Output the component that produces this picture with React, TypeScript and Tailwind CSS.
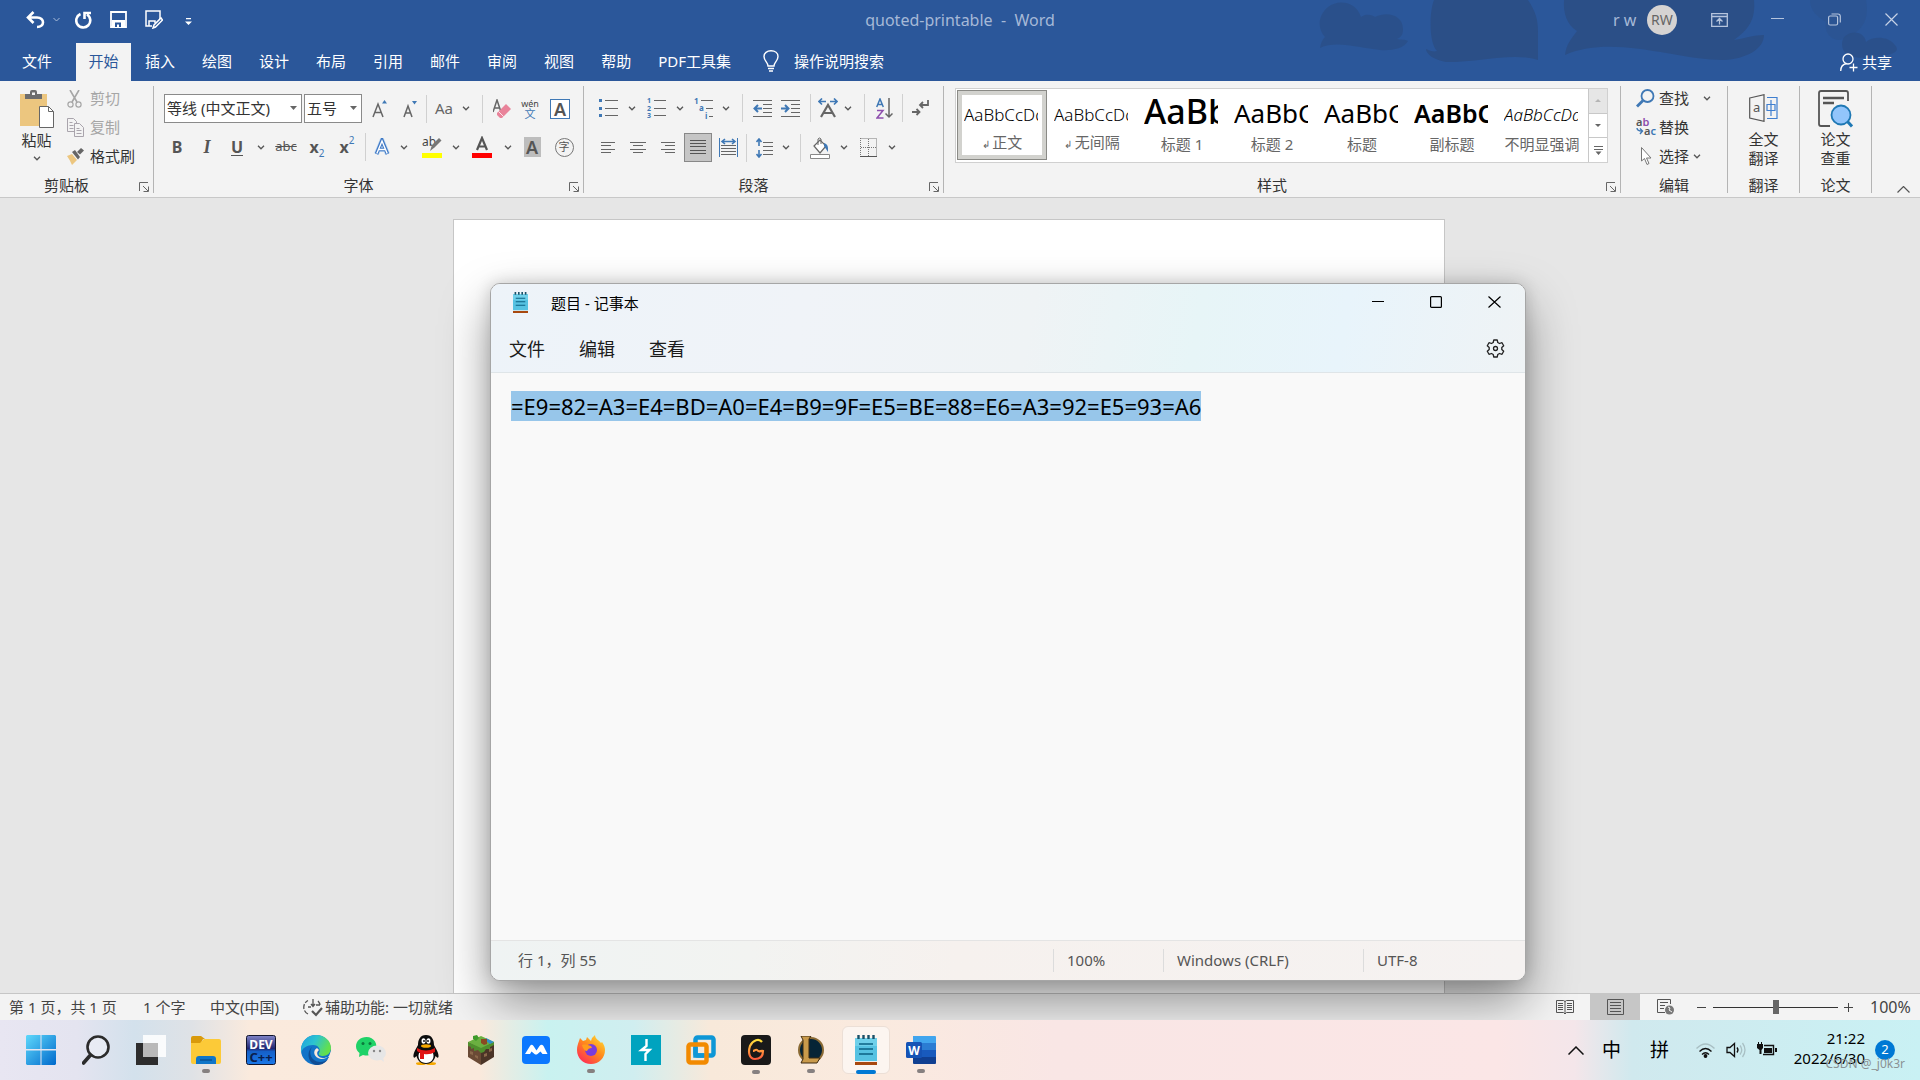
import { useEffect, useRef, type ReactNode } from 'react';

const NOTE = '=E9=82=A3=E4=BD=A0=E4=B9=9F=E5=BE=88=E6=A3=92=E5=93=A6';

const TABS = ['插入', '绘图', '设计', '布局', '引用', '邮件', '审阅', '视图', '帮助', 'PDF工具集'];

const STYLES = [
  { name: '正文', mark: true, sample: 'AaBbCcDd', look: 'text-[17px] leading-9 font-light' },
  { name: '无间隔', mark: true, sample: 'AaBbCcDd', look: 'text-[17px] leading-9 font-light' },
  { name: '标题 1', sample: 'AaBb', look: 'text-[34px] leading-6 font-medium' },
  { name: '标题 2', sample: 'AaBbC', look: 'text-[26px] leading-7' },
  { name: '标题', sample: 'AaBbC', look: 'text-[26px] leading-7' },
  { name: '副标题', sample: 'AaBbC', look: 'text-[25px] leading-7 font-semibold' },
  { name: '不明显强调', sample: 'AaBbCcDd', look: 'text-[17px] leading-8 font-light italic text-[#404040]' }
];

/* ---------- small shared pieces ---------- */

function Chevron() {
  return (
    <svg width="8" height="5" viewBox="0 0 8 5" fill="none" stroke="#555" strokeWidth="1.3" className="shrink-0">
      <path d="M1 .8 4 3.8 7 .8" />
    </svg>
  );
}

interface ToolProps {
  label: string;
  /** Width class of the slot */
  w?: string;
  children: ReactNode;
}

function Tool({ label, w = 'w-8', children }: ToolProps) {
  return (
    <button aria-label={label} className={`flex h-7 shrink-0 items-center justify-center ${w}`}>
      {children}
    </button>
  );
}

function More({ w = 'w-4' }: { w?: string }) {
  return (
    <Tool label="更多选项" w={w}>
      <Chevron />
    </Tool>
  );
}

function Sep({ w = 'w-4' }: { w?: string }) {
  return (
    <span className={`flex h-7 shrink-0 justify-center ${w}`}>
      <span className="w-px bg-[#d0d0d0]" />
    </span>
  );
}

function Launcher() {
  return (
    <button aria-label="对话框启动器" className="absolute right-1 bottom-px">
      <svg width="10" height="10" viewBox="0 0 10 10" fill="none" stroke="#666">
        <path d="M.5 9V.5H9M4 4l5 5M9.5 4.5v5h-5" />
      </svg>
    </button>
  );
}

interface GroupProps {
  title: string;
  w: string;
  /** Padding of the tools area, the title keeps the full width */
  pad?: string;
  launcher?: boolean;
  children: ReactNode;
}

function Group({ title, w, pad = '', launcher = false, children }: GroupProps) {
  return (
    <section className={`relative flex h-[107px] shrink-0 flex-col border-r border-[#b4b4b4] ${w}`}>
      <div className={`flex-1 ${pad}`}>{children}</div>
      <h2 className={`text-center leading-4 text-[#333] ${launcher ? 'pr-5' : ''}`}>{title}</h2>
      {launcher && <Launcher />}
    </section>
  );
}

/** Horizontal text lines, each given as [x1, x2, y] */
function Lines({ rows, color = '#666' }: { rows: number[][]; color?: string }) {
  return <path d={rows.map(([a, b, y]) => `M${a} ${y}.5H${b}`).join('')} stroke={color} />;
}

/* ---------- Word ---------- */

function TitleBar() {
  return (
    <header className="relative overflow-hidden bg-[#2b579a] text-white">
      <svg className="absolute top-0 right-0" width="630" height="81" viewBox="1290 0 630 81" fill="#2b4f87">
        <path d="M1320 48c1-5 2-8 5-11-8-8-7-22 3-30 10-8 28-6 33 10 5-4 12-2 14 0 12-6 28-2 28 12 0 6-2 8-6 10 4 1 8 0 11 2-4 8-18 10-28 9-20-2-44-10-60-2Z" opacity=".8" />
        <path d="M1434 0h94c8 12 10 20 10 32v28c-26-8-54 2-92 2-12-2-20-8-20-13 4 2 8 3 11 2-8-8-8-38-3-51Z" />
        <path d="M1564 0h190c2 20-6 30-20 40 12-2 20-5 30-5 0 14-18 24-40 25-50 0-110-26-159-5 1-10 6-16 12-24-10-6-14-18-13-31Z" />
        <path d="M1810 0h56c4 20-4 34-26 40-10 0-16-8-14-18-10-6-16-12-16-22Z" opacity=".35" />
        <path d="M1842 44c0-14 22-16 24-2 6-6 22-6 28 2 8 8-2 10-12 12-24 4-40 2-40-12Z" opacity=".8" />
      </svg>
      <div className="relative flex h-[43px] items-center justify-between pb-1">
        <div className="flex w-[307px] items-center pl-[26px]">
          <button aria-label="撤消">
            <svg width="19" height="18" viewBox="0 0 19 18" fill="none" stroke="#fff" strokeWidth="2.6">
              <path d="M2 6.5h9c8 0 8 9.500 0 9.500M7.500 1 2 6.500l5.500 5.500" />
            </svg>
          </button>
          <button aria-label="撤消选项" className="px-2">
            <svg width="7" height="5" viewBox="0 0 7 5" fill="none" stroke="#a9bcd9">
              <path d="M.5 1l3 3 3-3" />
            </svg>
          </button>
          <button aria-label="重复" className="pl-[7px]">
            <svg width="17" height="18" viewBox="0 0 17 18" fill="none" stroke="#fff" strokeWidth="2.6">
              <path d="M5.500 3A7 7 0 1 0 12 3.500M9.500 8V2H16" />
            </svg>
          </button>
          <button aria-label="保存" className="pl-[18px]">
            <svg width="17" height="17" viewBox="0 0 17 17">
              <path d="M1 1h15v15H1z" fill="none" stroke="#fff" strokeWidth="1.800" />
              <path d="M2 9h13v7H2zM4 1h9v1H4z" fill="#fff" />
              <path d="M5 11.500h6V16H9v-2.500H7V16H5z" fill="#2b579a" />
            </svg>
          </button>
          <button aria-label="另存为" className="pl-[18px]">
            <svg width="18" height="19" viewBox="0 0 18 19" fill="none" stroke="#fff" strokeWidth="1.500">
              <path d="M7 16H1V1h14v8M4 16v-5h6v2" />
              <path d="m8 18 1-3 7-7 1.500 2-7 7Z" />
            </svg>
          </button>
          <button aria-label="自定义快速访问工具栏" className="pt-1 pl-[22px]">
            <svg width="7" height="8" viewBox="0 0 7 8" fill="#fff">
              <path d="M1 0h5v1.200H1zM0 3.500h7L3.500 7z" />
            </svg>
          </button>
        </div>
        <h1 className="text-base text-[#a6b9d7]">quoted-printable&nbsp; -&nbsp; Word</h1>
        <div className="flex w-[307px] items-center">
          <span className="w-[34px] text-base text-[#a6b9d7]">r w</span>
          <span className="flex size-[30px] items-center justify-center rounded-full bg-[#d5d3d2] text-sm text-[#666]">RW</span>
          <button aria-label="功能区显示选项" className="pl-[34px]">
            <svg width="17" height="14" viewBox="0 0 17 14" fill="none" stroke="#b5c4dd" strokeWidth="1.300">
              <path d="M.700.700h15.600v12.600H.700zM.700 3.500h15.600M8.500 11.500V6M5.500 8.500l3-3 3 3" />
            </svg>
          </button>
          <button aria-label="最小化" className="pl-[43px]">
            <svg width="13" height="13" stroke="#b5c4dd">
              <path d="M0 5.500h13" />
            </svg>
          </button>
          <button aria-label="向下还原" className="pl-11">
            <svg width="13" height="13" viewBox="0 0 13 13" fill="none" stroke="#b5c4dd" strokeWidth="1.200">
              <rect x=".600" y="3" width="9" height="9" rx="1.500" />
              <path d="M3.500 1h6.500q2.300 0 2.300 2.300V9.500" />
            </svg>
          </button>
          <button aria-label="关闭" className="pl-11">
            <svg width="13" height="13" viewBox="0 0 13 13" stroke="#c6d2e6" strokeWidth="1.200">
              <path d="M.500.500l12 12M12.500.500l-12 12" />
            </svg>
          </button>
        </div>
      </div>
      <nav className="relative flex h-[38px] items-center">
        <button className="w-[76px] pr-4 pb-0.5 pl-[22px] text-left">文件</button>
        <button className="h-full w-[55px] bg-[#f3f3f3] pb-0.5 text-center text-[#2b579a]">开始</button>
        <div className="flex gap-[3px] pb-0.5 pl-0.5">
          {TABS.map((tab) => (
            <button key={tab} className="px-3">
              {tab}
            </button>
          ))}
        </div>
        <button className="flex items-center gap-[15px] pb-0.5 pl-5">
          <svg width="16" height="22" viewBox="0 0 16 22" fill="none" stroke="#fff" strokeWidth="1.400">
            <path d="M5 16c0-4-4-5-4-9.500C1 3 4 .800 8 .800s7 2.200 7 5.700c0 4.500-4 5.500-4 9.500ZM5 18.500h6M6 21h4" />
          </svg>
          操作说明搜索
        </button>
        <button className="ml-auto flex items-center gap-1 pr-7">
          <svg width="18" height="19" viewBox="0 0 18 19" fill="none" stroke="#fff" strokeWidth="1.300">
            <circle cx="8" cy="6" r="5" />
            <path d="M.700 18c0-5 3-7 6-7.500M13.500 10.500v8M9.500 14.500h8" />
          </svg>
          共享
        </button>
      </nav>
    </header>
  );
}

function ClipboardGroup() {
  return (
    <Group title="剪贴板" w="w-[154px]" launcher>
      <div className="flex">
        <button className="flex w-[67px] flex-col items-center pt-1 pl-1.5">
          <svg width="36" height="38" viewBox="0 0 36 38">
            <path d="M1 4h27v32H1z" fill="#ecc67f" />
            <path d="M6 9V4h5V2q0-2 2-2h3q2 0 2 2v2h5v5Z" fill="#6d6d6d" />
            <path d="M13 2.500h3V5h-3z" fill="#f3f3f3" />
            <path d="M20.500 16.500h9l5 5v16h-14z" fill="#fff" stroke="#666" />
            <path d="M29.500 16.500v5h5" fill="none" stroke="#666" />
          </svg>
          <span className="leading-6">粘贴</span>
          <span className="flex h-3 items-center">
            <Chevron />
          </span>
        </button>
        <div className="flex flex-col whitespace-nowrap">
          <button disabled className="flex h-[25px] items-center gap-2 text-[#a6a6a6]">
            <svg width="15" height="18" viewBox="0 0 15 18" fill="none" stroke="#a6a6a6" strokeWidth="1.600">
              <path d="M3 0l7 12M12 0 5 12" />
              <circle cx="3.500" cy="14.500" r="2.600" strokeWidth="1.200" />
              <circle cx="11.500" cy="14.500" r="2.600" strokeWidth="1.200" />
            </svg>
            剪切
          </button>
          <button disabled className="flex h-8 items-center gap-1.5 text-[#a6a6a6]">
            <svg width="17" height="19" viewBox="0 0 17 19" fill="#f3f3f3" stroke="#a9a4ac">
              <path d="M.500.500h6l3 3v10h-9zM2.500 4.500h3M2.500 7.500h4M2.500 10.500h4" />
              <path d="M7.500 5.500h5l4 4v9h-9zM9.500 10.500h3M9.500 12.500h5M9.500 15.500h5" />
            </svg>
            复制
          </button>
          <button className="flex h-[27px] items-center gap-1.5">
            <svg width="17" height="17" viewBox="0 0 17 17">
              <path d="M0 8l5-2 5 6-5 5q-2-5-5-9Z" fill="#ecc67f" />
              <path d="M5 4l3-2 5 7-2 2.500ZM10 4l4-4 3 2.500-4 4Z" fill="#666" />
            </svg>
            格式刷
          </button>
        </div>
      </div>
    </Group>
  );
}

function Combo({ label, value, w }: { label: string; value: string; w: string }) {
  return (
    <div className={`relative ${w}`}>
      <select aria-label={label} className="h-[29px] w-full appearance-none border border-[#8a8a8a] bg-white pl-0.5 text-[#333]">
        <option>{value}</option>
      </select>
      <svg className="pointer-events-none absolute top-3 right-[5px]" width="7" height="4" viewBox="0 0 7 4" fill="#666">
        <path d="M0 0h7L3.500 4z" />
      </svg>
    </div>
  );
}

function FontGroup() {
  return (
    <Group title="字体" w="w-[430px]" pad="pl-2" launcher>
      <div className="flex items-center pt-2">
        <div className="flex w-[200px] gap-0.5 pl-0.5">
          <Combo label="字体" value="等线 (中文正文)" w="w-[138px]" />
          <Combo label="字号" value="五号" w="w-[58px]" />
        </div>
        <Tool label="增大字号" w="w-9">
          <svg width="16" height="18" viewBox="0 0 16 18">
            <path d="M1 17 6 4l5 13M3 12.500h6" fill="none" stroke="#666" strokeWidth="1.500" />
            <path d="M10 3.500 12.500 0 15 3.500z" fill="#3f78b5" />
          </svg>
        </Tool>
        <Tool label="减小字号" w="w-6">
          <svg width="16" height="18" viewBox="0 0 16 18">
            <path d="M2 17 6 6l4 11M3.500 13h5" fill="none" stroke="#666" strokeWidth="1.500" />
            <path d="M10 1 12.500 4.500 15 1z" fill="#3f78b5" />
          </svg>
        </Tool>
        <Sep w="w-2" />
        <Tool label="更改大小写" w="w-7">
          <span className="text-[15px] text-[#666]">Aa</span>
        </Tool>
        <More />
        <Sep />
        <Tool label="清除所有格式" w="w-6">
          <svg width="18" height="20" viewBox="0 0 18 20" className="shrink-0">
            <path d="M0 13 4 1l4 12M1.500 9h5" fill="none" stroke="#666" strokeWidth="1.500" />
            <path d="m4 14 9-9 5 5-9 9H7l-3-3Z" fill="#e9839a" />
            <path d="m5.500 12.500 5 5" stroke="#fff" strokeWidth=".800" />
          </svg>
        </Tool>
        <Tool label="拼音指南">
          <span className="flex flex-col items-center text-[#444]">
            <span className="text-[9px] leading-[9px]">wén</span>
            <span className="text-[11px] leading-[11px] text-[#3f78b5]">文</span>
          </span>
        </Tool>
        <Tool label="字符边框" w="w-7">
          <span className="flex size-5 items-center justify-center border border-[#3f78b5] bg-white text-lg font-semibold text-[#555]">A</span>
        </Tool>
      </div>
      <div className="flex items-center pt-[10px] text-[#555]">
        <Tool label="加粗" w="w-[30px]">
          <b className="text-base">B</b>
        </Tool>
        <Tool label="倾斜" w="w-[30px]">
          <i className="font-['Liberation_Serif',serif] text-lg font-bold">I</i>
        </Tool>
        <Tool label="下划线" w="w-[30px]">
          <span className="border-b border-[#555] text-base leading-4 font-bold">U</span>
        </Tool>
        <More w="w-[18px]" />
        <Tool label="删除线">
          <span className="text-[13px] line-through">abc</span>
        </Tool>
        <Tool label="下标" w="w-[30px]">
          <b className="text-base">x</b>
          <span className="self-end text-[10px] text-[#3f78b5]">2</span>
        </Tool>
        <Tool label="上标" w="w-[30px]">
          <b className="text-base">x</b>
          <span className="self-start text-[10px] text-[#3f78b5]">2</span>
        </Tool>
        <Sep w="w-1.5" />
        <Tool label="文本效果" w="w-7">
          <svg width="16" height="18" viewBox="0 0 16 18" fill="none">
            <path d="M2.500 16 8 2.500 13.500 16M5 11.500h6" stroke="#a9cdf0" strokeWidth="5" opacity=".7" />
            <path d="M2.500 16 8 2.500 13.500 16M5 11.500h6" stroke="#3f78c5" strokeWidth="3.600" />
            <path d="M2.800 15.500 8 3l5.200 12.500M5 11.500h6" stroke="#fff" strokeWidth="1.400" />
          </svg>
        </Tool>
        <More w="w-4" />
        <Tool label="文本突出显示颜色" w="w-10">
          <svg width="20" height="22" viewBox="0 0 20 22">
            <text x="0" y="10" fontSize="12" fill="#444">ab</text>
            <path d="m8 15 2-6 7-7 2.500 2.500-7 7Z" fill="#777" />
            <path d="M0 17h20v5H0z" fill="#ff0" />
          </svg>
        </Tool>
        <More w="w-2" />
        <Tool label="字体颜色" w="w-11">
          <svg width="20" height="22" viewBox="0 0 20 22">
            <path d="M5 14 10 2l5 12M7 10.500h6" fill="none" stroke="#555" strokeWidth="2.200" />
            <path d="M0 17h20v5H0z" fill="red" />
          </svg>
        </Tool>
        <More w="w-2" />
        <Tool label="字符底纹" w="w-10">
          <span className="flex h-5 w-[17px] items-center justify-center bg-[#bdbdbd] text-lg font-semibold">A</span>
        </Tool>
        <Tool label="带圈字符" w="w-6">
          <span className="flex size-[19px] items-center justify-center rounded-full border border-[#777] text-[11px]">字</span>
        </Tool>
      </div>
    </Group>
  );
}

function ParagraphGroup() {
  return (
    <Group title="段落" w="w-[360px]" pad="pl-2" launcher>
      <div className="flex items-center pt-2">
        <Tool label="项目符号">
          <svg width="19" height="20" viewBox="0 0 19 20">
            <Lines rows={[[6, 19, 2], [6, 19, 10], [6, 19, 17]]} />
            <path d="M0 1h3v3H0zM0 9h3v3H0zM0 16h3v3H0z" fill="#3f78b5" />
          </svg>
        </Tool>
        <More />
        <Tool label="编号">
          <svg width="19" height="20" viewBox="0 0 19 20">
            <Lines rows={[[7, 19, 2], [7, 19, 10], [7, 19, 17]]} />
            <g fill="#3f78b5" fontSize="7" fontWeight="700">
              <text x="0" y="5">1</text>
              <text x="0" y="13">2</text>
              <text x="0" y="20">3</text>
            </g>
          </svg>
        </Tool>
        <More />
        <Tool label="多级列表">
          <svg width="20" height="21" viewBox="0 0 20 21">
            <Lines rows={[[7, 19, 2], [12, 19, 10], [15, 19, 18]]} />
            <g fill="#3f78b5" fontSize="8" fontWeight="700">
              <text x="0" y="6">1</text>
              <text x="5" y="13">a</text>
              <text x="11" y="21">i</text>
            </g>
          </svg>
        </Tool>
        <More w="w-3" />
        <Sep w="w-5" />
        <Tool label="减少缩进量" w="w-5">
          <svg width="19" height="19" viewBox="0 0 19 19" className="shrink-0">
            <Lines rows={[[0, 19, 1], [10, 19, 5], [10, 19, 9], [10, 19, 13], [0, 19, 17]]} />
            <path d="M9 9.500H1.500M5 6 1.500 9.500 5 13" fill="none" stroke="#3f78b5" strokeWidth="2" />
          </svg>
        </Tool>
        <Tool label="增加缩进量" w="w-9">
          <svg width="19" height="19" viewBox="0 0 19 19">
            <Lines rows={[[0, 19, 1], [10, 19, 5], [10, 19, 9], [10, 19, 13], [0, 19, 17]]} />
            <path d="M0 9.500h7.500M4 6l3.500 3.500L4 13" fill="none" stroke="#3f78b5" strokeWidth="2" />
          </svg>
        </Tool>
        <Sep w="w-1" />
        <Tool label="中文版式">
          <svg width="20" height="20" viewBox="0 0 20 20" fill="none">
            <path d="M3 19 10 7l7 12M6 15h8" stroke="#666" strokeWidth="2.200" />
            <path d="M8 3.500H1M4 .500l-3 3 3 3M12 3.500h7M16 .500l3 3-3 3" stroke="#3f78b5" strokeWidth="1.600" />
          </svg>
        </Tool>
        <More w="w-2" />
        <Sep w="w-6" />
        <Tool label="排序" w="w-4">
          <svg width="17" height="21" viewBox="0 0 17 21" fill="none" className="shrink-0">
            <path d="M.700 9 4 1l3.300 8M2 6.500h4" stroke="#3f78b5" strokeWidth="1.500" />
            <path d="M1 12.500h6L1 20h6.500" stroke="#8e4fae" strokeWidth="1.500" />
            <path d="M13 0v19M9.500 15.500 13 19l3.500-3.500" stroke="#666" strokeWidth="1.500" />
          </svg>
        </Tool>
        <Sep w="w-5" />
        <Tool label="显示编辑标记" w="w-4">
          <svg width="17" height="16" viewBox="0 0 17 16" fill="none" stroke="#666" strokeWidth="1.800" className="shrink-0">
            <path d="M16 0v5H8M11 2 8 5l3 3M0 12h7M4.500 9l3 3-3 3" />
          </svg>
        </Tool>
      </div>
      <div className="flex items-center pt-[11px]">
        <Tool label="左对齐">
          <svg width="16" height="13" viewBox="0 0 16 13">
            <Lines rows={[[1, 15, 1], [1, 11, 4], [1, 15, 8], [1, 11, 11]]} />
          </svg>
        </Tool>
        <Tool label="居中" w="w-7">
          <svg width="16" height="13" viewBox="0 0 16 13">
            <Lines rows={[[0, 16, 1], [3, 13, 4], [0, 16, 8], [3, 13, 11]]} />
          </svg>
        </Tool>
        <Tool label="右对齐">
          <svg width="16" height="13" viewBox="0 0 16 13">
            <Lines rows={[[1, 15, 1], [5, 15, 4], [1, 15, 8], [5, 15, 11]]} />
          </svg>
        </Tool>
        <button aria-label="两端对齐" aria-pressed="true" className="flex h-[29px] w-7 items-center justify-center border border-[#888] bg-[#c5c5c5]">
          <svg width="16" height="15" viewBox="0 0 16 15">
            <Lines rows={[[0, 16, 0], [0, 16, 3], [0, 16, 6], [0, 16, 10], [0, 16, 13]]} color="#555" />
          </svg>
        </button>
        <Tool label="分散对齐">
          <svg width="19" height="19" viewBox="0 0 19 19" fill="none">
            <path d="M.500 0v19M18.500 0v19" stroke="#3f78b5" />
            <path d="M3 3.500h13M6 1 3 3.500 6 6M13 1l3 2.500L13 6" stroke="#3f78b5" strokeWidth="1.600" />
            <Lines rows={[[2, 17, 7], [2, 17, 10], [2, 17, 13], [2, 17, 16]]} />
          </svg>
        </Tool>
        <Sep w="w-1" />
        <Tool label="行和段落间距">
          <svg width="17" height="20" viewBox="0 0 17 20" fill="none">
            <path d="M3 1v7M.500 4 3 1l2.500 3M3 12v7M.500 16 3 19l2.500-3" stroke="#3f78b5" strokeWidth="1.600" />
            <Lines rows={[[7, 17, 4], [7, 17, 8], [7, 17, 12], [7, 17, 16]]} />
          </svg>
        </Tool>
        <More w="w-3" />
        <Sep />
        <Tool label="底纹" w="w-6">
          <svg width="20" height="22" viewBox="0 0 20 22" fill="none" className="shrink-0">
            <path d="M4 9 10 3l6 6-6 7Z" fill="#fff" stroke="#666" strokeWidth="1.200" />
            <path d="M8 8V2q1.500-2 3 0v5" stroke="#666" />
            <path d="M14 6q5 1 4 9-2-3-4-6Z" fill="#3f78b5" />
            <path d="M.500 17.500h19v4H.500z" fill="#fff" stroke="#888" />
          </svg>
        </Tool>
        <More w="w-6" />
        <Tool label="边框" w="w-6">
          <svg width="17" height="19" viewBox="0 0 17 19" fill="none" stroke="#777">
            <path d="M.500.500h16v17M.500 0v18M8.500 1v17M1 9.500h16" strokeDasharray="1 1" />
            <path d="M0 18.500h17" stroke="#555" />
          </svg>
        </Tool>
        <More w="w-6" />
      </div>
    </Group>
  );
}

function StylesGroup() {
  return (
    <Group title="样式" w="min-w-[677px] flex-1" pad="pr-3 pl-[11px]" launcher>
      <div className="mt-0.5 flex h-[75px] border border-[#d0d0d0] bg-white">
        <div className="flex flex-1 p-px">
          {STYLES.map((style, i) => (
            <button
              key={style.name}
              className={`flex h-[70px] w-[90px] shrink-0 flex-col justify-end overflow-hidden border ${
                i === 0 ? 'border-[#8a8a86] ring-4 ring-[#d2d2ce] ring-inset' : 'border-transparent'
              }`}
            >
              <span className={`mx-[6px] flex h-9 w-[74px] items-start overflow-hidden text-black ${style.look}`}>
                {style.sample}
              </span>
              <span className="w-full pb-1.5 text-center leading-[18px] whitespace-nowrap text-[#666]">
                {style.mark && <span className="text-[10px]">↲ </span>}
                {style.name}
              </span>
            </button>
          ))}
        </div>
        <div className="flex w-[19px] flex-col divide-y divide-[#c8c8c8] border-l border-[#c8c8c8]">
          <button aria-label="上一行" disabled className="flex flex-1 items-center justify-center bg-[#e6e6e6]">
            <svg width="6" height="3" fill="#b5b5b5">
              <path d="M0 3h6L3 0z" />
            </svg>
          </button>
          <button aria-label="下一行" className="flex flex-1 items-center justify-center">
            <svg width="6" height="3" fill="#666">
              <path d="M0 0h6L3 3z" />
            </svg>
          </button>
          <button aria-label="其他样式" className="flex flex-1 items-center justify-center">
            <svg width="9" height="9" fill="#666">
              <path d="M0 0h9v1H0zM0 3h9v1H0zM1.500 5.500h6L4.500 9z" />
            </svg>
          </button>
        </div>
      </div>
    </Group>
  );
}

function EditGroup() {
  return (
    <Group title="编辑" w="w-[107px]">
      <button className="flex h-[25px] items-center gap-1 pl-[15px]">
        <svg width="19" height="19" viewBox="0 0 19 19" fill="none" stroke="#3f78b5">
          <circle cx="11.500" cy="7" r="6" strokeWidth="1.800" />
          <path d="M7 11.500 1 17.500" strokeWidth="2.800" />
        </svg>
        查找
        <span className="pl-2.5">
          <Chevron />
        </span>
      </button>
      <button className="flex h-8 items-center gap-1 pl-[15px]">
        <svg width="19" height="20" viewBox="0 0 19 20" className="overflow-visible">
          <text x="0" y="9" fontSize="11" fontWeight="600" fill="#555">
            a<tspan fill="#8e4fae">b</tspan>
          </text>
          <text x="8" y="18" fontSize="11" fontWeight="600" fill="#555">
            a<tspan fill="#3f78b5">c</tspan>
          </text>
          <path d="M1 11q0 3 5 3M4 11.500l2.500 2.500L4 17" fill="none" stroke="#3f78b5" strokeWidth="1.400" />
        </svg>
        替换
      </button>
      <button className="flex h-[26px] items-center gap-1 pl-[15px]">
        <svg width="19" height="18" viewBox="0 0 19 18" fill="#fff" stroke="#777">
          <path d="M5.500.500V14l3-2.500 2.500 6 2-1-2.500-5.500h4.500Z" />
        </svg>
        选择
        <Chevron />
      </button>
    </Group>
  );
}

function Ribbon() {
  return (
    <div className="flex h-[117px] border-b border-[#c8c8c8] bg-[#f3f3f3] pt-[5px]">
      <ClipboardGroup />
      <FontGroup />
      <ParagraphGroup />
      <StylesGroup />
      <EditGroup />
      <Group title="翻译" w="w-[72px]">
        <button className="flex w-full flex-col items-center pt-2 leading-[19px]">
          <svg width="29" height="28" viewBox="0 0 29 28" fill="none">
            <path d="M.700 4 15 .700v26.600L.700 24Z" stroke="#555" strokeWidth="1.200" />
            <path d="M18 3.500h10v21H18M18 10.500h8v6h-8zM22 6v16" stroke="#3f7fd0" strokeWidth="1.200" />
            <text x="4" y="18" fontSize="13" fill="#555">a</text>
          </svg>
          <span className="pt-2">全文</span>
          <span>翻译</span>
        </button>
      </Group>
      <Group title="论文" w="w-[72px]">
        <button className="flex w-full flex-col items-center pt-1 leading-[19px]">
          <svg width="35" height="38" viewBox="0 0 35 38" fill="none">
            <path d="M12 36H3q-2 0-2-2V3q0-2 2-2h25q2 0 2 2v8" stroke="#555" strokeWidth="1.800" />
            <path d="M5 8h21M5 13h11" stroke="#555" strokeWidth="2.400" />
            <path d="m29 31 5 5.500" stroke="#1e78b4" strokeWidth="3" />
            <circle cx="23" cy="25" r="9.500" fill="#92c5fb" stroke="#1e78b4" strokeWidth="1.800" />
          </svg>
          <span className="pt-0.5">论文</span>
          <span>查重</span>
        </button>
      </Group>
      <button aria-label="折叠功能区" className="flex w-12 items-end pb-1 pl-[25px]">
        <svg width="13" height="7" fill="none" stroke="#555" strokeWidth="1.200">
          <path d="M.500 6.500l6-6 6 6" />
        </svg>
      </button>
    </div>
  );
}

function StatusBar() {
  return (
    <footer className="flex h-[27px] items-center border-t border-[#c6c6c6] bg-[#f3f3f3] pl-[9px] text-[#444]">
      <span className="w-[134px]">第 1 页，共 1 页</span>
      <span className="w-[67px]">1 个字</span>
      <span className="w-[93px]">中文(中国)</span>
      <span className="flex items-center gap-0.5">
        <svg width="20" height="19" viewBox="0 0 20 19" fill="none" stroke="#555" strokeWidth="1.300">
          <path d="M5 16A7.500 7.500 0 0 1 5 2.500M15 3a7.500 7.500 0 0 1 2 4" strokeDasharray="5 1.500" />
          <path d="M10 1v7M8 6l2 2.500L12 6M5 9h3M13 7h4" />
          <path d="m9 13 4 4 6-7" strokeWidth="2.200" />
        </svg>
        辅助功能: 一切就绪
      </span>
      <div className="ml-auto flex h-full items-center">
        <button aria-label="阅读视图" className="w-[50px] pl-4">
          <svg width="18" height="16" viewBox="0 0 18 16" fill="none" stroke="#555">
            <path d="M.500 1.500h7L9 2.500l1.500-1h7v12h-7L9 15l-1.500-1.500h-7zM9 2v13" />
            <path d="M2 4.500h5M2 6.500h5M2 8.500h5M2 10.500h5M11 4.500h5M11 6.500h5M11 8.500h5M11 10.500h5" />
          </svg>
        </button>
        <button aria-label="页面视图" aria-pressed="true" className="flex h-full w-[50px] items-center justify-center bg-[#c6c6c6]">
          <svg width="17" height="16" viewBox="0 0 17 16" fill="none" stroke="#555">
            <path d="M.500.500h16v15H.500zM3 3.500h11M3 6.500h11M3 9.500h11M3 12.500h11" />
          </svg>
        </button>
        <button aria-label="Web 版式视图" className="w-[57px] pl-[17px]">
          <svg width="18" height="16" viewBox="0 0 18 16" fill="none" stroke="#555">
            <path d="M8 13.500H.500v-13h13V5M3 3.500h8M3 6.500h5M3 9.500h4" />
            <circle cx="12.500" cy="11" r="4.500" fill="#777" stroke="none" />
            <path d="M11 8l2 1-1 2 3 2" stroke="#f3f3f3" />
          </svg>
        </button>
        <button aria-label="缩小" className="w-4">
          <svg width="9" height="9" stroke="#444">
            <path d="M0 4.500h9" />
          </svg>
        </button>
        <input
          type="range"
          aria-label="缩放"
          min="0"
          max="200"
          defaultValue="100"
          className="h-4 w-[125px] appearance-none bg-[linear-gradient(#333,#333)] bg-[length:100%_1px] bg-center bg-no-repeat [&::-webkit-slider-thumb]:h-3.5 [&::-webkit-slider-thumb]:w-1.5 [&::-webkit-slider-thumb]:appearance-none [&::-webkit-slider-thumb]:bg-[#666]"
        />
        <button aria-label="放大" className="w-8 pl-1.5">
          <svg width="9" height="9" stroke="#444">
            <path d="M0 4.500h9M4.500 0v9" />
          </svg>
        </button>
        <span className="w-[50px] text-base">100%</span>
      </div>
    </footer>
  );
}

/* ---------- Notepad ---------- */

function NotepadIcon({ w, h }: { w: number; h: number }) {
  return (
    <svg width={w} height={h} viewBox="0 0 22 30" preserveAspectRatio="none">
      <path d="M0 26h22v4H0z" fill="#a8480f" />
      <path d="M0 24h22v3H0z" fill="#eee" />
      <path d="M0 3h22v23H0z" fill="#56c2e2" />
      <path d="M0 3h22v8H0z" fill="#6fd0ea" />
      <path d="M4 9h14M4 14h14M4 19h14" stroke="#0b6284" strokeWidth="1.600" />
      <path d="M3.500 0v4M8.500 0v4M13.500 0v4M18.500 0v4" stroke="#1a5168" strokeWidth="2.400" />
    </svg>
  );
}

function Notepad() {
  const area = useRef<HTMLTextAreaElement>(null);

  useEffect(() => {
    area.current?.focus();
    area.current?.select();
  }, []);

  return (
    <div className="absolute top-[283px] right-[394px] bottom-[99px] left-[490px] flex flex-col overflow-hidden rounded-[10px] border border-[#a6a6a6] bg-[#f9f9f9] shadow-[0_22px_50px_rgba(0,0,0,0.4),0_0_16px_rgba(0,0,0,0.16)]">
      <div className="h-[89px] border-b border-[#dfe5e8] bg-[linear-gradient(100deg,#edf3f9_0%,#f0f3f8_30%,#eff3f5_52%,#e7f5f7_68%,#e8f4fb_82%,#eff3f5_100%)]">
        <div className="flex h-9 items-center pl-[22px]">
          <NotepadIcon w={15} h={21} />
          <span className="pt-0.5 pl-[23px] text-black">题目 - 记事本</span>
          <div className="ml-auto flex items-center gap-[46px] pr-6">
            <button aria-label="最小化">
              <svg width="12" height="12" stroke="#000">
                <path d="M0 5.500h12" />
              </svg>
            </button>
            <button aria-label="最大化">
              <svg width="12" height="12" fill="none" stroke="#000" strokeWidth="1.200">
                <rect x=".600" y=".600" width="10.800" height="10.800" rx="1" />
              </svg>
            </button>
            <button aria-label="关闭">
              <svg width="13" height="12" stroke="#000" strokeWidth="1.200">
                <path d="M.500.500l12 11M12.500.500l-12 11" />
              </svg>
            </button>
          </div>
        </div>
        <div className="flex h-14 items-center gap-[34px] pl-[18px] text-lg text-[#1b1b1b]">
          <button className="pt-0.5">文件</button>
          <button className="pt-0.5">编辑</button>
          <button className="pt-0.5">查看</button>
          <button aria-label="设置" className="ml-auto pr-5">
            <svg width="19" height="19" viewBox="0 0 19 19" fill="none" stroke="#222" strokeWidth="1.300">
              <path d="M7.800 1h3.400l.6 2.500 1.700 1 2.500-.8 1.700 3-1.900 1.800v2l1.900 1.800-1.700 3-2.500-.8-1.700 1-.6 2.500H7.800l-.6-2.500-1.700-1-2.500.8-1.700-3 1.900-1.800v-2L1.300 6.700l1.700-3 2.500.8 1.700-1Z" strokeLinejoin="round" />
              <circle cx="9.500" cy="9.500" r="2" />
            </svg>
          </button>
        </div>
      </div>
      <textarea
        ref={area}
        aria-label="文本编辑器"
        defaultValue={NOTE}
        spellCheck={false}
        className="flex-1 resize-none bg-[#f9f9f9] px-5 pt-5 text-[22px] leading-[26px] text-black outline-none selection:bg-[#97c6ea] selection:text-black"
      />
      <div className="flex h-10 items-center border-t border-[#e4e4e4] bg-[linear-gradient(90deg,#eff3f3_0%,#f2f3f1_25%,#f6f1ee_45%,#f5f2f1_100%)] pl-[27px] text-[#555]">
        <span className="flex-1">行 1，列 55</span>
        <span className="w-[110px] border-l border-[#dcdcdc] pl-[13px]">100%</span>
        <span className="w-[200px] border-l border-[#dcdcdc] pl-[13px]">Windows (CRLF)</span>
        <span className="w-[162px] border-l border-[#dcdcdc] pl-[13px]">UTF-8</span>
      </div>
    </div>
  );
}

/* ---------- Taskbar ---------- */

const APPS: { name: string; open?: boolean; active?: boolean; icon: ReactNode }[] = [
  {
    name: '开始',
    icon: (
      <svg width="30" height="30" viewBox="0 0 30 30">
        <linearGradient id="win" x1="0" y1="0" x2="1" y2="1">
          <stop stopColor="#5fd8fb" />
          <stop offset="1" stopColor="#0069cc" />
        </linearGradient>
        <path d="M1 0h13.500v14H0V1zM15.500 0H29l1 1v13H15.500zM0 15.500h14.500V30H1l-1-1zM15.500 15.500H30V29l-1 1H15.500z" fill="url(#win)" />
      </svg>
    )
  },
  {
    name: '搜索',
    icon: (
      <svg width="28" height="30" viewBox="0 0 28 30" fill="none" stroke="#2b2b2b">
        <circle cx="16" cy="12" r="10.500" fill="#fff" fillOpacity=".3" strokeWidth="2.600" />
        <path d="m8.500 20-7 8" strokeWidth="3.600" strokeLinecap="round" />
      </svg>
    )
  },
  {
    name: '任务视图',
    icon: (
      <svg width="30" height="30" viewBox="0 0 30 30">
        <path d="M0 8h22v22H0z" fill="#2d2d2d" />
        <path d="M7 0h23v22H7z" fill="#fff" fillOpacity=".85" />
        <path d="M7 8h15v14H7z" fill="#b9b9b9" />
      </svg>
    )
  },
  {
    name: '文件资源管理器',
    open: true,
    icon: (
      <svg width="30" height="28" viewBox="0 0 30 28">
        <path d="M0 2q0-2 2-2h8l4 3h-2L9 9H0z" fill="#d99a0b" />
        <path d="M0 7h9l4-4h15q2 0 2 2v21q0 2-2 2H2q-2 0-2-2z" fill="#fcca38" />
        <path d="M5 28v-5q0-3 3-3h14q3 0 3 3v5z" fill="#1076c8" />
        <path d="M9 24h12" stroke="#0a4a86" strokeWidth="1.200" />
      </svg>
    )
  },
  {
    name: 'Dev-C++',
    icon: (
      <svg width="30" height="30" viewBox="0 0 30 30">
        <linearGradient id="dev" x1="0" y1="0" x2="0" y2="1">
          <stop stopColor="#8185c8" />
          <stop offset=".450" stopColor="#20266f" />
          <stop offset=".550" stopColor="#1560c8" />
          <stop offset="1" stopColor="#1a78e8" />
        </linearGradient>
        <rect x=".500" y=".500" width="29" height="29" rx="2" fill="url(#dev)" stroke="#10142c" />
        <text x="15" y="14" textAnchor="middle" fontSize="12" fontWeight="700" fill="#fff">DEV</text>
        <text x="15" y="27" textAnchor="middle" fontSize="13" fontWeight="700" fill="#0a1d4c">C++</text>
      </svg>
    )
  },
  {
    name: 'Edge',
    icon: (
      <svg width="30" height="30" viewBox="0 0 30 30">
        <linearGradient id="edge" x1="0" y1="0" x2="1" y2=".4">
          <stop stopColor="#1e9fe0" />
          <stop offset=".5" stopColor="#2cc3d0" />
          <stop offset="1" stopColor="#63e04c" />
        </linearGradient>
        <circle cx="15" cy="15" r="15" fill="#1273c8" />
        <path d="M0 14C1 5 7 0 15 0c9 0 15 6 15 13 0 5-4 8-8 8-3 0-5-1-4-3 2-3 0-8-6-8C6 10 1 13 0 18Z" fill="url(#edge)" />
        <path d="M11 12c-4 5-1 15 8 15 4 0 7-2 8-3-3 5-8 6-11 6-9-1-11-13-5-18Z" fill="#0f4d95" />
        <path d="M16 13c-5 3-3 10 4 11 4 0 7-2 8-3l2-5v14h-2l-1-6c3-4-2-1-5-1-5 0-8-5-4-8Z" fill="#fae9dc" />
      </svg>
    )
  },
  {
    name: '微信',
    icon: (
      <svg width="30" height="26" viewBox="0 0 30 26">
        <path d="M10.500 0C4.500 0 0 4 0 9.500c0 3 1.500 5 3.500 6.500L3 20l4-2q8 2 12-3c4-8-1-15-8.500-15Z" fill="#1fd267" />
        <ellipse cx="21" cy="16" rx="9" ry="7.500" fill="#e6e6e6" />
        <path d="m24 22 4 3-1-5Z" fill="#e6e6e6" />
        <g fill="#0b7a3c">
          <circle cx="7" cy="6.500" r="1.500" />
          <circle cx="14" cy="6.500" r="1.500" />
        </g>
        <g fill="#888">
          <circle cx="18" cy="14" r="1.200" />
          <circle cx="24" cy="14" r="1.200" />
        </g>
      </svg>
    )
  },
  {
    name: 'QQ',
    icon: (
      <svg width="26" height="30" viewBox="0 0 26 30">
        <ellipse cx="8" cy="28.500" rx="5" ry="1.500" fill="#f5a800" />
        <ellipse cx="18" cy="28.500" rx="5" ry="1.500" fill="#f5a800" />
        <path d="M13 0c6 0 8 5 8 10 2 4 5 8 4.500 12-1 1.500-2 0-3-1-1 5-5 8-9.500 8s-8.500-3-9.500-8c-1 1-2 2.500-3 1C0 18 3 14 5 10c0-5 2-10 8-10Z" fill="#0c0c0c" />
        <path d="M6 18h14c2 6-2 10-7 10s-9-4-7-10Z" fill="#fff" />
        <ellipse cx="10.500" cy="6" rx="2" ry="2.800" fill="#fff" />
        <ellipse cx="15.500" cy="6" rx="2" ry="2.800" fill="#fff" />
        <circle cx="11" cy="6" r=".9" />
        <circle cx="15" cy="6" r=".9" />
        <ellipse cx="13" cy="11" rx="5" ry="1.800" fill="#f5a800" />
        <path d="M4 13q9 5 18 0v4q-5 3-11 2v5H7v-6l-3-2Z" fill="#e01414" />
      </svg>
    )
  },
  {
    name: 'Minecraft',
    icon: (
      <svg width="26" height="30" viewBox="0 0 26 30">
        <path d="M0 7 13 13v17L0 22Z" fill="#6a4a35" />
        <path d="M26 7 13 13v17l13-8Z" fill="#4b3427" />
        <path d="M0 7 13 1l13 6-13 7Z" fill="#6bb040" />
        <path d="M0 7v4l3 1v2l3-1v3l4-1 3 3v-5ZM26 7v3l-4 2v2l-4 0-2 3-3 1v-5Z" fill="#4f8f2d" />
        <path d="m18 3 8 4-4 2-5-4Z" fill="#2f8fc8" />
        <path d="M13 4h6v5l-3 1-3-2Z" fill="#8a4a22" />
        <path d="M5 1l4-1 2 3-3 3-3-2Z" fill="#3f9a2a" />
        <path d="M2 16l3 1v3l-3-1ZM7 20l3 1v3l-3-2ZM16 19l3-1v3l-3 1ZM21 14l3-1v3l-3 1Z" fill="#8a674b" />
      </svg>
    )
  },
  {
    name: 'Mirror',
    icon: (
      <svg width="28" height="28" viewBox="0 0 28 28">
        <rect width="28" height="28" rx="4" fill="#0b78ff" />
        <path d="M3 18 8 10q1.500-2.500 3.500 0l3 4.500 3-4.500q2-2.500 4 0l4 8h-5l-2-2.500-3 2.500q-1.500 1-3 0L9.500 15.500 8 18Z" fill="#fff" />
      </svg>
    )
  },
  {
    name: 'Firefox',
    open: true,
    icon: (
      <svg width="28" height="29" viewBox="0 0 28 29">
        <linearGradient id="fox" x1="1" y1="0" x2=".2" y2="1">
          <stop stopColor="#ffe838" />
          <stop offset=".5" stopColor="#ff8a1c" />
          <stop offset="1" stopColor="#ff2a58" />
        </linearGradient>
        <path d="M2 6l1-3 3 3 3-1 1-3 4 4 1-3 3-3c0 4 4 5 6 8l1-1c2 3 3 5 3 8 0 8-6 14-14 14S0 23 0 15c0-4 1-6 2-9Z" fill="url(#fox)" />
        <circle cx="14" cy="15" r="6" fill="#7a3bdc" />
        <path d="M5 10c3-1 6 0 9 1l1 2c-3 0-4 1-5 3-2 0-4-2-5-6Z" fill="#ff9a1c" />
      </svg>
    )
  },
  {
    name: 'Burp Suite',
    icon: (
      <svg width="30" height="30" viewBox="0 0 30 30">
        <path d="M0 0h30v30H0z" fill="#00a3bf" />
        <path d="M15.500 4v7l-5 4h8l-4 4v7" fill="none" stroke="#fff" strokeWidth="2.400" />
      </svg>
    )
  },
  {
    name: 'VMware',
    icon: (
      <svg width="30" height="30" viewBox="0 0 30 30" fill="none" strokeWidth="4.500">
        <rect x="9.500" y="2.500" width="18" height="18" rx="2" stroke="#0e97d6" />
        <rect x="2.500" y="9.500" width="18" height="18" rx="2" stroke="#f28a00" />
        <path d="M9.500 12v8.500H18" stroke="#0e97d6" />
      </svg>
    )
  },
  {
    name: 'Goby',
    open: true,
    icon: (
      <svg width="30" height="30" viewBox="0 0 30 30" fill="none">
        <linearGradient id="goby" x1="0" y1="0" x2="0" y2="1">
          <stop stopColor="#ffe23c" />
          <stop offset="1" stopColor="#ff5a3c" />
        </linearGradient>
        <rect width="30" height="30" rx="4" fill="#191919" />
        <path d="M21 7c-3-4-9-2-12 4-2 6-1 13 5 13 5 0 8-3 8-8-2-1-4 2-6-1-1-1-3 1-4 1" stroke="url(#goby)" strokeWidth="2.200" />
      </svg>
    )
  },
  {
    name: 'League of Legends',
    open: true,
    icon: (
      <svg width="27" height="28" viewBox="0 0 27 28">
        <circle cx="14" cy="14" r="12" fill="#062436" stroke="#8a6a34" strokeWidth="2" />
        <path d="M4 0h10l-2 3v19h11l-3 5H4l2-4V4Z" fill="#c99a4b" stroke="#3d2b12" />
      </svg>
    )
  },
  { name: '记事本', open: true, active: true, icon: <NotepadIcon w={22} h={30} /> },
  {
    name: 'Word',
    open: true,
    icon: (
      <svg width="30" height="28" viewBox="0 0 30 28">
        <path d="M7 0h22q1 0 1 1v6H7z" fill="#41a5ee" />
        <path d="M7 7h23v7H7z" fill="#2b7cd3" />
        <path d="M7 14h23v7H7z" fill="#185abd" />
        <path d="M7 21h23v6q0 1-1 1H8q-1 0-1-1z" fill="#103f91" />
        <rect y="6" width="16" height="16" rx="1.500" fill="#1553b5" />
        <text x="8" y="18.500" textAnchor="middle" fontSize="12" fontWeight="700" fill="#fff">W</text>
      </svg>
    )
  }
];

function Taskbar() {
  return (
    <footer className="relative flex h-[60px] items-center bg-[linear-gradient(90deg,#e8e6f2_0%,#e4e4f0_4%,#d3e1ec_7%,#dfe2e6_10%,#faeadd_13%,#fae9dc_25%,#c9f2f0_28.500%,#d0eef0_33%,#f8e9da_37%,#faeadf_46%,#f9e6e5_55%,#fbe6e6_78%,#f4e6ea_82%,#d0e9ee_85%,#c9f1f4_100%)] pl-[13px] text-black">
      {APPS.map((app) => (
        <button key={app.name} aria-label={app.name} className="flex w-[55px] shrink-0 justify-center">
          <span
            className={`flex h-12 w-12 flex-col items-center rounded-md border pt-2 ${
              app.active ? 'border-[#ecdfd6] bg-[#fcf5f0]' : 'border-transparent'
            }`}
          >
            <span className="flex h-[30px] items-center">{app.icon}</span>
            {app.open && (
              <span className={`mt-[5px] h-1 shrink-0 rounded-full ${app.active ? 'w-5 bg-[#0078d4]' : 'w-2 bg-[#868080]'}`} />
            )}
          </span>
        </button>
      ))}
      <div className="ml-auto flex items-center">
        <button aria-label="显示隐藏的图标" className="w-[34px]">
          <svg width="16" height="9" fill="none" stroke="#111" strokeWidth="1.500">
            <path d="M.500 8.500 8 1l7.500 7.500" />
          </svg>
        </button>
        <button className="w-12 text-left text-[19px]">中</button>
        <button className="w-[46px] text-left text-[19px]">拼</button>
        <button aria-label="网络、音量和电池" className="flex items-center gap-[11px]">
          <svg width="19" height="15" viewBox="0 0 19 15" fill="none" stroke="#111" strokeWidth="1.400">
            <path d="M.500 5.500q9-9 18 0" stroke="#a9c0c4" />
            <path d="M3.500 8.500q6-6 12 0M6 11.500q3.500-3.500 7 0" />
            <circle cx="9.500" cy="13" r="1.200" fill="#111" />
          </svg>
          <svg width="20" height="16" viewBox="0 0 20 16" fill="none" stroke="#111" strokeWidth="1.300">
            <path d="M1 5.500h3L8.500 1.500v13L4 10.500H1zM11 5.500q2 2.500 0 5" />
            <path d="M14 3.500q3.500 4.500 0 9M16.500 1q5 7 0 14" stroke="#a9c0c4" />
          </svg>
          <svg width="20" height="16" viewBox="0 0 20 16" fill="#111">
            <path d="M0 2h1V0h1v2h2V0h1v2h1v4L4.500 8v4h-2V8L0 6z" />
            <path d="M7 3.500h9.500v9H6" fill="none" stroke="#111" strokeWidth="1.400" />
            <path d="M7 6h8v5H7zM18 6h2v4h-2z" />
          </svg>
        </button>
        <button className="w-[88px] pb-1 text-right leading-5">
          21:22
          <br />
          2022/6/30
        </button>
        <span className="mr-[25px] ml-2.5 flex size-5 items-center justify-center rounded-full bg-[#0078d4] text-[13px] text-white">2</span>
      </div>
      <span className="absolute right-[15px] bottom-2 text-xs text-[#8a9294]">CSDN @_j0k3r</span>
    </footer>
  );
}

export default function App() {
  return (
    <div className="relative flex h-screen flex-col overflow-hidden bg-[#e6e6e6] font-['Noto_Sans','Noto_Sans_CJK_SC',sans-serif] text-[15px] text-[#333]">
      <TitleBar />
      <Ribbon />
      <main className="flex flex-1 justify-center pt-[21px] pr-[22px]">
        <div className="w-[992px] border border-b-0 border-[#c6c6c6] bg-white" />
      </main>
      <StatusBar />
      <Notepad />
      <Taskbar />
    </div>
  );
}
